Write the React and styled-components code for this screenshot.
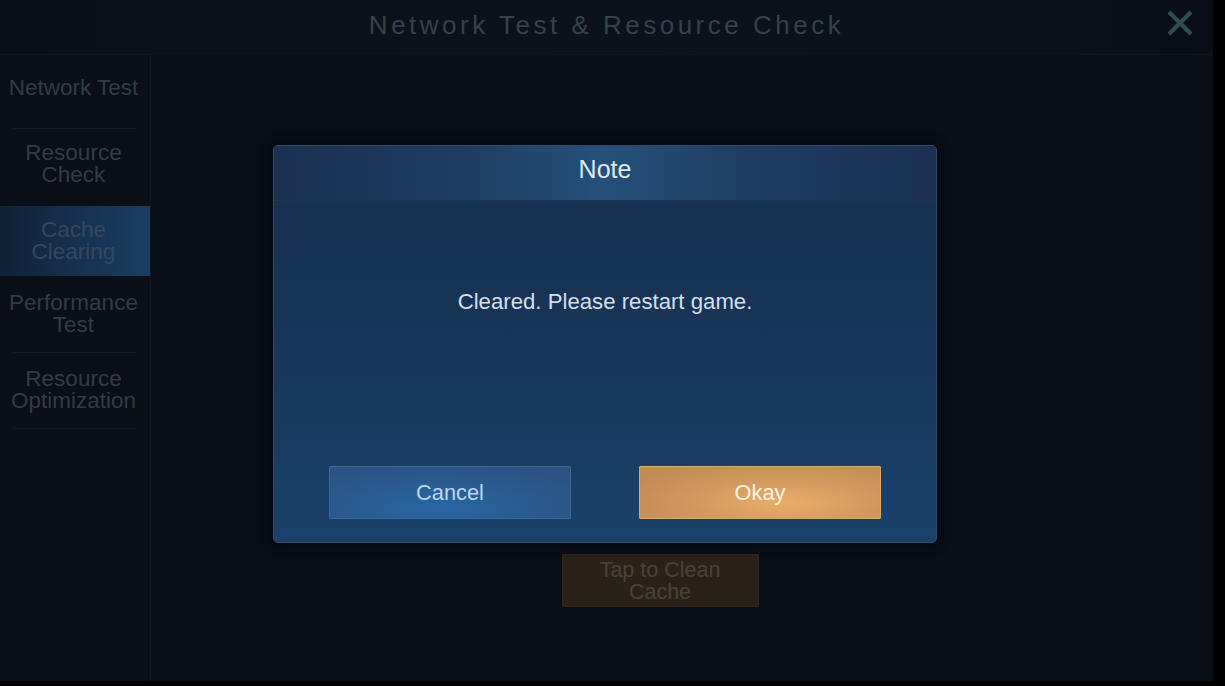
import React from "react";
import styled, { createGlobalStyle } from "styled-components";

const Global = createGlobalStyle`
  html, body { margin: 0; padding: 0; background: #000; }
  body { font-family: "Liberation Sans", Arial, sans-serif; }
`;

const Frame = styled.div`
  width: 1225px;
  height: 686px;
  background: #000;
  overflow: hidden;
`;

const Screen = styled.div`
  position: relative;
  width: 1213px;
  height: 681px;
  background: #080d16;
  display: flex;
  flex-direction: column;
`;

const Header = styled.header`
  height: 54px;
  flex: none;
  display: grid;
  grid-template-columns: 1fr auto 1fr;
  align-items: center;
  background: linear-gradient(90deg, #080d16 0%, #0b111b 16%, #0c121c 50%, #0b111b 84%, #080d16 100%);
  border-bottom: 1px solid #0e151f;
`;

const Title = styled.h1`
  grid-column: 2;
  margin: 0;
  font-family: "Liberation Sans", Arial, sans-serif;
  font-weight: 400;
  font-size: 26px;
  letter-spacing: 3.5px;
  color: #36414c;
  padding-bottom: 4px;
`;

const CloseButton = styled.button`
  grid-column: 3;
  justify-self: end;
  margin-right: 18px;
  margin-bottom: 9px;
  width: 30px;
  height: 30px;
  padding: 0;
  border: none;
  background: transparent;
  display: flex;
  align-items: center;
  justify-content: center;
`;

const Body = styled.div`
  flex: 1;
  display: flex;
`;

const Sidebar = styled.nav`
  width: 150px;
  flex: none;
  border-right: 1px solid #111822;
  background: #090e17;
  display: flex;
  flex-direction: column;
`;

const NavItem = styled.div`
  height: ${(p) => p.$h}px;
  display: flex;
  align-items: center;
  justify-content: center;
  text-align: center;
  font-size: 22.5px;
  line-height: 22px;
  color: ${(p) => (p.$active ? "#34485c" : "#323c48")};
  background: ${(p) =>
    p.$active
      ? "linear-gradient(90deg, #0f2236 0%, #163250 55%, #1b3e60 100%)"
      : "transparent"};
  margin: ${(p) => (p.$active ? "0" : "0 13px")};
  padding-right: 3px;
  padding-bottom: ${(p) => p.$pb || 0}px;
  border-bottom: ${(p) => (p.$sep ? "1px solid #131a24" : "none")};
  box-sizing: border-box;
  white-space: nowrap;
`;

const Content = styled.main`
  flex: 1;
  display: flex;
  flex-direction: column;
  justify-content: flex-end;
  align-items: center;
  padding-bottom: 74px;
  padding-right: 44px;
`;

const CleanButton = styled.button`
  width: 197px;
  height: 53px;
  background: #2a2218;
  border: 1px solid #30271c;
  border-radius: 1px;
  color: #4a4136;
  font-family: "Liberation Sans", Arial, sans-serif;
  font-size: 21.5px;
  line-height: 22px;
  padding: 0;
`;

const Overlay = styled.div`
  position: absolute;
  inset: 0;
  display: flex;
  justify-content: center;
  align-items: flex-start;
  padding-top: 145px;
  padding-right: 3px;
`;

const Modal = styled.section`
  width: 664px;
  height: 398px;
  box-sizing: border-box;
  border-radius: 5px;
  border: 1px solid #284c73;
  background: linear-gradient(180deg, #162e4c 0%, #183658 50%, #1b416a 100%);
  display: flex;
  flex-direction: column;
  overflow: hidden;
  box-shadow: 0 0 12px rgba(0, 0, 0, 0.5);
`;

const ModalHeader = styled.div`
  height: 55px;
  flex: none;
  display: flex;
  align-items: center;
  justify-content: center;
  background: linear-gradient(90deg, #1a3050 0%, #1f3e62 30%, #25507a 50%, #1f3e62 70%, #1a3050 100%);
  border-bottom: 1px solid #1b3858;
  box-sizing: border-box;
  padding-bottom: 8px;
`;

const ModalTitle = styled.h2`
  margin: 0;
  font-weight: 400;
  font-size: 25px;
  color: #dde9f4;
  font-family: "Liberation Sans", Arial, sans-serif;
`;

const Message = styled.p`
  margin: 0;
  padding-top: 89px;
  text-align: center;
  font-size: 22.2px;
  line-height: 24px;
  color: #d3dfeb;
`;

const Actions = styled.div`
  margin-top: auto;
  padding: 0 55px 23px 55px;
  display: flex;
  justify-content: space-between;
`;

const ActionButton = styled.button`
  width: 242px;
  height: 53px;
  box-sizing: border-box;
  border-radius: 1px;
  font-family: "Liberation Sans", Arial, sans-serif;
  font-size: 21.8px;
  padding: 0;
  border: 1px solid ${(p) => (p.$primary ? "#d9a770" : "#3c6898")};
  color: ${(p) => (p.$primary ? "#fff4e6" : "#bcd7f0")};
  background: ${(p) =>
    p.$primary
      ? "radial-gradient(ellipse 70% 90% at 60% 70%, #e9ad68 0%, #d59c5f 45%, #c28a56 100%)"
      : "radial-gradient(ellipse 70% 90% at 45% 80%, #2866a4 0%, #2a5c92 50%, #2d5283 100%)"};
`;

const items = [
  { label: "Network Test", h: 74, sep: true, pb: 8 },
  { label: ["Resource", "Check"], h: 77, sep: false, pb: 7 },
  { label: ["Cache", "Clearing"], h: 70, active: true },
  { label: ["Performance", "Test"], h: 77, sep: true, pb: 1 },
  { label: ["Resource", "Optimization"], h: 76, sep: true, pb: 1 },
];

function Label({ label }) {
  if (Array.isArray(label)) {
    return (
      <span>
        {label[0]}
        <br />
        {label[1]}
      </span>
    );
  }
  return <span>{label}</span>;
}

export default function App() {
  return (
    <>
      <Global />
      <Frame>
        <Screen>
          <Header>
            <Title>Network Test &amp; Resource Check</Title>
            <CloseButton aria-label="Close">
              <svg width="28" height="28" viewBox="0 0 28 28">
                <path d="M3 3 L25 25 M25 3 L3 25" stroke="#2f4b53" strokeWidth="4.2" strokeLinecap="butt" />
              </svg>
            </CloseButton>
          </Header>
          <Body>
            <Sidebar>
              {items.map((it, i) => (
                <NavItem key={i} $h={it.h} $sep={it.sep} $active={it.active} $pb={it.pb}>
                  <Label label={it.label} />
                </NavItem>
              ))}
            </Sidebar>
            <Content>
              <CleanButton>
                Tap to Clean
                <br />
                Cache
              </CleanButton>
            </Content>
          </Body>
          <Overlay>
            <Modal>
              <ModalHeader>
                <ModalTitle>Note</ModalTitle>
              </ModalHeader>
              <Message>Cleared. Please restart game.</Message>
              <Actions>
                <ActionButton>Cancel</ActionButton>
                <ActionButton $primary>Okay</ActionButton>
              </Actions>
            </Modal>
          </Overlay>
        </Screen>
      </Frame>
    </>
  );
}
